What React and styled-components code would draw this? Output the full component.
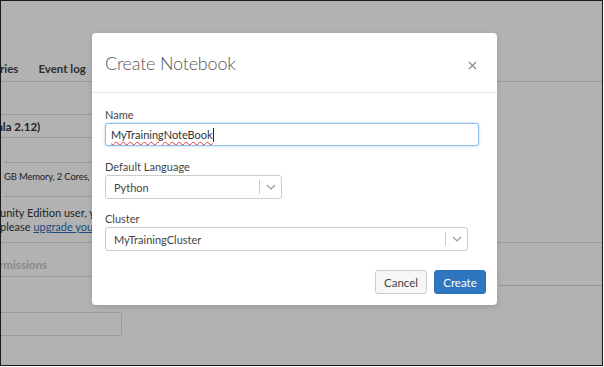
import React from 'react'
import styled, { createGlobalStyle } from 'styled-components'

const Global = createGlobalStyle`
  html, body { margin: 0; padding: 0; background: #fff; }
  body { font-family: Lato, "Open Sans", sans-serif; color: #333; }
`

const Frame = styled.div`
  position: relative;
  width: 601px;
  height: 364px;
  border: 1px solid #1a1a1a;
  overflow: hidden;
  background: #fff;
`

const Page = styled.div`
  display: flex;
  flex-direction: column;
  padding-top: 55px;
`

const Tabs = styled.div`
  display: flex;
  gap: 20px;
  height: 25px;
  border-bottom: 1px solid #ddd;
  margin-left: -1px;
`

const Tab = styled.span`
  font-size: 11.5px;
  font-weight: 700;
  color: ${p => (p.muted ? '#c4c4c4' : '#444')};
  line-height: 25px;
`

const Field = styled.div`
  margin-top: ${p => p.top || 0}px;
  margin-left: ${p => p.ml || -6}px;
  width: 110px;
  height: ${p => p.h || 24}px;
  border: 1px solid #ddd;
  border-left: none;
  display: flex;
  align-items: ${p => p.align || 'center'};
  padding-top: ${p => p.pt || 0}px;
  box-sizing: border-box;
  font-size: ${p => p.size || 12}px;
  font-weight: ${p => p.weight || 400};
  letter-spacing: ${p => p.ls || 0}px;
  color: #333;
  white-space: nowrap;
`

const Note = styled.div`
  margin-top: 9px;
  font-size: 11px;
  line-height: 14px;
  color: #333;
  white-space: nowrap;
  margin-left: -1px;
  a { color: #2a6fb4; text-decoration: underline; }
`

const PermRow = styled.div`
  margin-top: 8px;
  border-top: 1px solid #ddd;
  display: flex;
  align-items: flex-start;
  margin-left: -2px;
`

const PermTab = styled.div`
  width: 500px;
  height: 34px;
  border-bottom: 1px solid #ddd;
  padding-top: 9px;
  box-sizing: border-box;
  display: flex;
`

const PermRest = styled.div`
  flex: 1;
  height: 42px;
  border-bottom: 1px solid #d4d4d4;
`

const SearchBox = styled.div`
  margin-top: 26px;
  margin-left: -4px;
  width: 125px;
  height: 24px;
  border: 1px solid #ddd;
  border-radius: 3px;
  box-sizing: border-box;
`

const Overlay = styled.div`
  position: absolute;
  inset: 0;
  background: rgba(0, 0, 0, 0.3);
`

const Modal = styled.div`
  position: absolute;
  left: 91px;
  top: 32px;
  width: 405px;
  height: 272px;
  background: #fff;
  border-radius: 4px;
  box-shadow: 0 2px 6px rgba(0, 0, 0, 0.12);
  display: flex;
  flex-direction: column;
`

const Header = styled.div`
  height: 60px;
  box-sizing: border-box;
  border-bottom: 1px solid #e8e8e8;
  display: flex;
  align-items: center;
  justify-content: space-between;
  padding: 0 19px 0 13px;
`

const Title = styled.h2`
  margin: 0;
  font-size: 18px;
  font-weight: 300;
  color: #555;
  letter-spacing: -0.2px;
`

const Close = styled.button`
  border: none;
  background: none;
  padding: 0;
  margin-top: 6px;
  width: 12px;
  height: 12px;
  display: flex;
  align-items: center;
  justify-content: center;
  cursor: pointer;
`

const Body = styled.div`
  padding: 15px 18px 0 13px;
  display: flex;
  flex-direction: column;
`

const Label = styled.label`
  font-size: 11px;
  color: #444;
  line-height: 14px;
  margin-top: ${p => p.top || 0}px;
  margin-bottom: 1px;
`

const TextInput = styled.div`
  height: 23px;
  box-sizing: border-box;
  border: 1px solid #8dbdea;
  border-radius: 3px;
  box-shadow: 0 0 3px rgba(102, 175, 233, 0.55);
  display: flex;
  align-items: center;
  padding-left: 5px;
  font-size: 11px;
  color: #333;
`

const Typed = styled.span`
  text-decoration: underline wavy #e03b3b;
  text-decoration-thickness: 1px;
  text-underline-offset: 2px;
  border-right: 1px solid #222;
  line-height: 14px;
`

const Select = styled.div`
  width: ${p => p.w}px;
  height: 24px;
  box-sizing: border-box;
  border: 1px solid #ccc;
  border-radius: 3px;
  display: flex;
  align-items: center;
  font-size: 11px;
  color: #444;
`

const SelectValue = styled.span`
  flex: 1;
  padding-left: 8px;
`

const Divider = styled.span`
  width: 1px;
  height: 14px;
  background: #ccc;
`

const Chevron = styled.span`
  width: 21px;
  display: flex;
  justify-content: center;
`

const Footer = styled.div`
  margin-top: auto;
  padding: 0 11px 11px 0;
  display: flex;
  justify-content: flex-end;
  gap: 7px;
`

const Button = styled.button`
  height: 24px;
  width: 52px;
  padding: 0;
  font-family: Lato, sans-serif;
  font-size: 11.5px;
  border-radius: 3px;
  border: 1px solid ${p => (p.primary ? '#2b6fb3' : '#ccc')};
  background: ${p => (p.primary ? '#2e77c0' : '#f6f6f6')};
  color: ${p => (p.primary ? '#fff' : '#444')};
`

const ChevronIcon = () => (
  <svg width="10" height="6" viewBox="0 0 10 6">
    <path d="M1 1l4 4 4-4" fill="none" stroke="#999" strokeWidth="1.2" />
  </svg>
)

function SelectBox({ w, value }) {
  return (
    <Select w={w}>
      <SelectValue>{value}</SelectValue>
      <Divider />
      <Chevron><ChevronIcon /></Chevron>
    </Select>
  )
}

export default function App() {
  return (
    <>
      <Global />
      <Frame>
        <Page>
          <Tabs>
            <Tab>ries</Tab>
            <Tab>Event log</Tab>
          </Tabs>
          <Field top={32} ml={-4} weight={700} size={11.5}>ala 2.12)</Field>
          <Field top={24} ml={3} h={35} size={9.5} ls={-0.2} align="flex-start" pt={8}>GB Memory, 2 Cores, 1</Field>
          <Note>unity Edition user, y<br />please <a>upgrade you</a></Note>
          <PermRow>
            <PermTab><Tab muted>rmissions</Tab></PermTab>
            <PermRest />
          </PermRow>
          <SearchBox />
        </Page>
        <Overlay />
        <Modal>
          <Header>
            <Title>Create Notebook</Title>
            <Close aria-label="close">
              <svg width="9" height="9" viewBox="0 0 9 9">
                <path d="M1 1l7 7M8 1l-7 7" stroke="#888" strokeWidth="1.1" />
              </svg>
            </Close>
          </Header>
          <Body>
            <Label>Name</Label>
            <TextInput><Typed>MyTrainingNoteBook</Typed></TextInput>
            <Label top={14}>Default Language</Label>
            <SelectBox w={177} value="Python" />
            <Label top={13}>Cluster</Label>
            <SelectBox w={363} value="MyTrainingCluster" />
          </Body>
          <Footer>
            <Button>Cancel</Button>
            <Button primary>Create</Button>
          </Footer>
        </Modal>
      </Frame>
    </>
  )
}
